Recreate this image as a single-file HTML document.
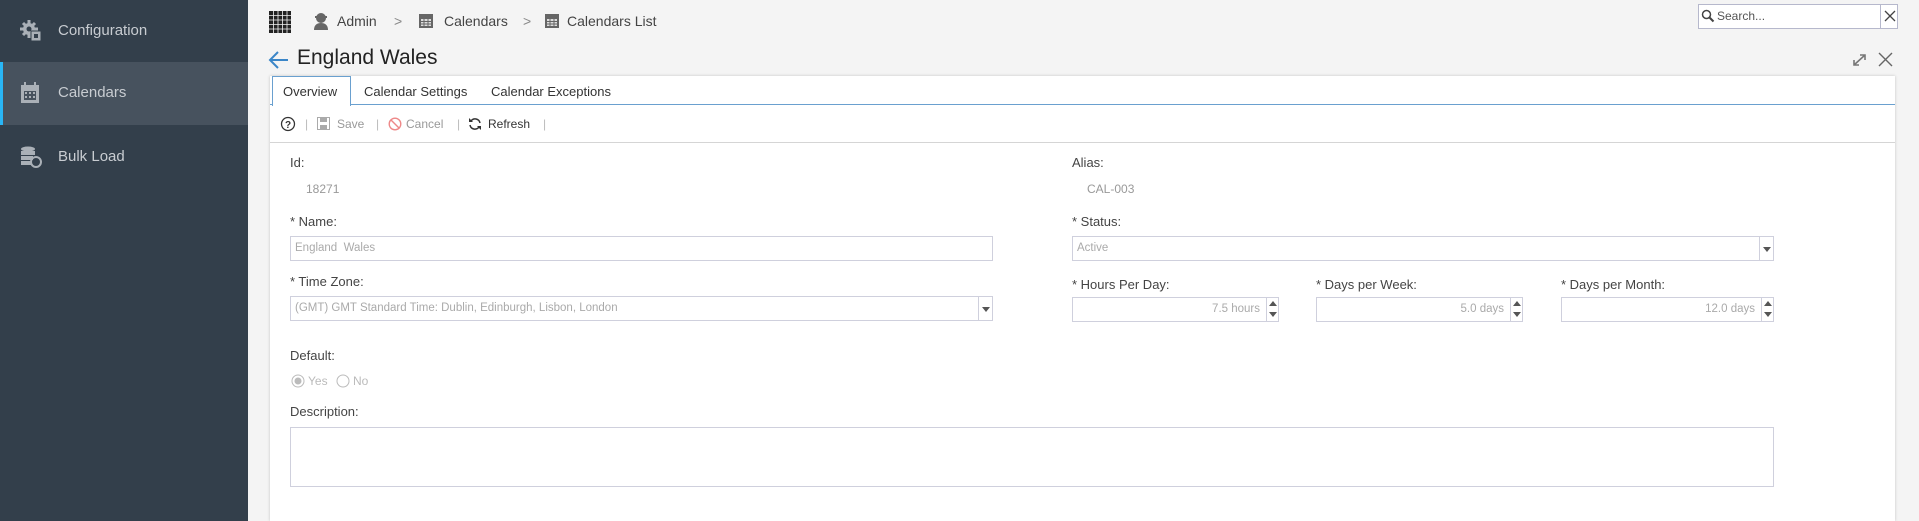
<!DOCTYPE html>
<html style="overflow:hidden;width:1919px;height:521px"><head><meta charset="utf-8"><style>
*{box-sizing:border-box;margin:0;padding:0}
body{width:1919px;height:521px;overflow:hidden;background:#f4f4f4;font-family:"Liberation Sans",sans-serif;font-size:13px;color:#333;position:relative}
.abs{position:absolute}
#side{left:0;top:0;width:248px;height:521px;background:#333f4b}
.item{position:absolute;left:0;width:248px;height:63px;color:#c8ccd1;font-size:15px}
.item span{position:absolute;left:58px;top:22px}
.item svg{position:absolute;left:20px;top:20px}
.active{background:#47525e}
.active:before{content:"";position:absolute;left:0;top:0;width:3px;height:100%;background:#29b6f6}
.bc{top:13px;font-size:14px;color:#444}
.panel{left:270px;top:76px;width:1625px;height:445px;background:#fff;box-shadow:0 0 3px rgba(0,0,0,.2)}
.lbl{font-size:13px;color:#444}
.val{font-size:12px;color:#999}
.inp{border:1px solid #cfd0dd;background:#fff;height:25px;font-size:11.5px;color:#aaa;padding:0 4px;line-height:23px;white-space:nowrap}
.dd{position:absolute;right:0;top:0;width:14px;height:23px;border-left:1px solid #cfd0dd}
.dd:after{content:"";position:absolute;left:3px;top:10px;border:4px solid transparent;border-top:5px solid #555;border-bottom:0}
.spin{position:absolute;right:0;top:0;width:12px;height:23px;border-left:1px solid #cfd0dd}
.spin:before{content:"";position:absolute;left:2px;top:3px;border:4px solid transparent;border-bottom:5px solid #555;border-top:0}
.spin:after{content:"";position:absolute;left:2px;top:14px;border:4px solid transparent;border-top:5px solid #555;border-bottom:0}
.num{text-align:right;padding-right:18px}
.tb{top:117px;font-size:12px}
</style></head><body>
<div id="side" class="abs">
 <div class="item" style="top:0"><svg width="22" height="22" viewBox="0 0 22 22"><circle cx="9" cy="9" r="6" fill="#aab0b7"/><circle cx="9" cy="9" r="2.5" fill="#333f4b"/><g stroke="#aab0b7" stroke-width="3"><path d="M9 0v4M9 14v4M0 9h4M14 9h4M3 3l3 3M15 3l-3 3M3 15l3-3"/></g><rect x="11" y="11" width="10" height="10" fill="#aab0b7" stroke="#333f4b"/><rect x="14" y="14" width="4" height="4" fill="#333f4b"/></svg><span>Configuration</span></div>
 <div class="item active" style="top:62px"><svg width="20" height="22" viewBox="0 0 20 22"><rect x="1" y="3" width="18" height="18" fill="#aab0b7"/><rect x="4" y="0" width="2" height="5" fill="#aab0b7"/><rect x="14" y="0" width="2" height="5" fill="#aab0b7"/><g fill="#47525e"><rect x="4" y="9" width="12" height="9"/></g><g fill="#aab0b7"><rect x="5" y="10" width="2" height="2"/><rect x="9" y="10" width="2" height="2"/><rect x="13" y="10" width="2" height="2"/><rect x="5" y="14" width="2" height="2"/><rect x="9" y="14" width="2" height="2"/><rect x="13" y="14" width="2" height="2"/></g></svg><span>Calendars</span></div>
 <div class="item" style="top:126px"><svg width="22" height="22" viewBox="0 0 22 22"><ellipse cx="8" cy="3" rx="7" ry="2.5" fill="#aab0b7"/><rect x="1" y="5" width="14" height="4" fill="#aab0b7"/><rect x="1" y="10" width="12" height="4" fill="#aab0b7"/><rect x="1" y="15" width="10" height="4" fill="#aab0b7"/><circle cx="16" cy="16" r="5" fill="none" stroke="#aab0b7" stroke-width="2"/></svg><span>Bulk Load</span></div>
</div>
<svg class="abs" style="left:269px;top:11px" width="22" height="22"><rect width="22" height="22" fill="#222"/><g stroke="#f4f4f4" stroke-width="0.8"><path d="M4.5 0v22M9 0v22M13.5 0v22M18 0v22M0 4.5h22M0 9h22M0 13.5h22M0 18h22"/></g></svg>
<svg class="abs" style="left:313px;top:12px" width="16" height="18"><circle cx="8" cy="6" r="5" fill="#666"/><rect x="2" y="4" width="12" height="2" fill="#666"/><path d="M1 18c0-5 3-7 7-7s7 2 7 7z" fill="#666"/></svg>
<div class="abs bc" style="left:337px">Admin</div>
<div class="abs bc" style="left:394px;color:#888">&gt;</div>
<svg class="abs" style="left:419px;top:12px" width="14" height="16"><rect x="0" y="2" width="14" height="14" fill="#666"/><rect x="2" y="7" width="10" height="7" fill="#ddd"/><path d="M2 9.5h10M2 12h10M5 7v7M9 7v7" stroke="#666"/></svg>
<div class="abs bc" style="left:444px">Calendars</div>
<div class="abs bc" style="left:523px;color:#888">&gt;</div>
<svg class="abs" style="left:545px;top:12px" width="14" height="16"><rect x="0" y="2" width="14" height="14" fill="#666"/><rect x="2" y="7" width="10" height="7" fill="#ddd"/><path d="M2 9.5h10M2 12h10M5 7v7M9 7v7" stroke="#666"/></svg>
<div class="abs bc" style="left:567px">Calendars List</div>
<div class="abs" style="left:1698px;top:4px;width:200px;height:25px;border:1px solid #b6b8cc;background:#fff"></div>
<div class="abs" style="left:1880px;top:4px;width:1px;height:25px;background:#b6b8cc"></div>
<svg class="abs" style="left:1701px;top:9px" width="14" height="15"><circle cx="5.5" cy="5.5" r="4" fill="none" stroke="#444" stroke-width="1.5"/><path d="M8.5 8.5l4 4" stroke="#444" stroke-width="2"/></svg>
<div class="abs" style="left:1717px;top:9px;font-size:12px;color:#555">Search...</div>
<svg class="abs" style="left:1884px;top:10px" width="12" height="12"><path d="M1 1l10 10M11 1L1 11" stroke="#444" stroke-width="1.3"/></svg>
<svg class="abs" style="left:268px;top:50px" width="22" height="20"><path d="M20 10H3M10 2L2 10l8 8" fill="none" stroke="#3b86c8" stroke-width="2"/></svg>
<div class="abs" style="left:297px;top:46px;font-size:21px;color:#222">England Wales</div>
<svg class="abs" style="left:1852px;top:53px" width="15" height="14"><path d="M2 12L13 2M8 2h5v5M2 7v5h5" fill="none" stroke="#777" stroke-width="1.6"/></svg>
<svg class="abs" style="left:1878px;top:52px" width="15" height="15"><path d="M1 1l13 13M14 1L1 14" stroke="#666" stroke-width="1.4"/></svg>
<div class="abs panel"></div>
<div class="abs" style="left:270px;top:104px;width:1625px;height:1px;background:#6aa0cf"></div>
<div class="abs" style="left:272px;top:76px;width:79px;height:30px;background:#fff;border:1px solid #6aa0cf;border-bottom:none"></div>
<div class="abs" style="left:283px;top:84px;font-size:13px;color:#333">Overview</div>
<div class="abs" style="left:364px;top:84px;font-size:13px;color:#333">Calendar Settings</div>
<div class="abs" style="left:491px;top:84px;font-size:13px;color:#333">Calendar Exceptions</div>
<div class="abs" style="left:270px;top:142px;width:1625px;height:1px;background:#d5d5d5"></div>
<svg class="abs" style="left:280px;top:116px" width="16" height="16"><circle cx="8" cy="8" r="6.5" fill="none" stroke="#333" stroke-width="1.3"/><text x="8" y="12" font-size="10" text-anchor="middle" font-family="Liberation Sans" font-weight="bold" fill="#333">?</text></svg>
<div class="abs tb" style="left:305px;color:#bbb">|</div>
<svg class="abs" style="left:317px;top:117px" width="13" height="13"><rect x="0.5" y="0.5" width="12" height="12" fill="none" stroke="#aaa"/><rect x="3" y="1" width="7" height="4" fill="#aaa"/><rect x="3" y="8" width="7" height="4" fill="#aaa"/></svg>
<div class="abs tb" style="left:337px;color:#999">Save</div>
<div class="abs tb" style="left:376px;color:#bbb">|</div>
<svg class="abs" style="left:388px;top:117px" width="14" height="14"><circle cx="7" cy="7" r="5.8" fill="none" stroke="#e88" stroke-width="1.4"/><path d="M3 3l8 8" stroke="#e88" stroke-width="1.4"/></svg>
<div class="abs tb" style="left:406px;color:#999">Cancel</div>
<div class="abs tb" style="left:457px;color:#bbb">|</div>
<svg class="abs" style="left:468px;top:117px" width="14" height="14"><path d="M12 6A5 5 0 0 0 3 4M2 8a5 5 0 0 0 9 2" fill="none" stroke="#333" stroke-width="1.5"/><path d="M1 1v4h4zM13 13V9H9z" fill="#333"/></svg>
<div class="abs tb" style="left:488px;color:#333">Refresh</div>
<div class="abs tb" style="left:543px;color:#bbb">|</div>

<div class="abs lbl" style="left:290px;top:155px">Id:</div>
<div class="abs val" style="left:306px;top:182px">18271</div>
<div class="abs lbl" style="left:290px;top:214px">* Name:</div>
<div class="abs inp" style="left:290px;top:236px;width:703px">England&nbsp; Wales</div>
<div class="abs lbl" style="left:290px;top:274px">* Time Zone:</div>
<div class="abs inp" style="left:290px;top:296px;width:703px">(GMT) GMT Standard Time: Dublin, Edinburgh, Lisbon, London<div class="dd"></div></div>
<div class="abs lbl" style="left:290px;top:348px">Default:</div>
<svg class="abs" style="left:290px;top:373px" width="110" height="16"><circle cx="8" cy="8" r="6" fill="none" stroke="#bbb"/><circle cx="8" cy="8" r="3.5" fill="#bbb"/><text x="18" y="12" font-size="12" fill="#bbb" font-family="Liberation Sans">Yes</text><circle cx="53" cy="8" r="6" fill="none" stroke="#bbb"/><text x="63" y="12" font-size="12" fill="#bbb" font-family="Liberation Sans">No</text></svg>
<div class="abs lbl" style="left:290px;top:404px">Description:</div>
<div class="abs" style="left:290px;top:427px;width:1484px;height:60px;border:1px solid #cfd0dd"></div>

<div class="abs lbl" style="left:1072px;top:155px">Alias:</div>
<div class="abs val" style="left:1087px;top:182px">CAL-003</div>
<div class="abs lbl" style="left:1072px;top:214px">* Status:</div>
<div class="abs inp" style="left:1072px;top:236px;width:702px">Active<div class="dd"></div></div>
<div class="abs lbl" style="left:1072px;top:277px">* Hours Per Day:</div>
<div class="abs inp num" style="left:1072px;top:297px;width:207px">7.5 hours<div class="spin"></div></div>
<div class="abs lbl" style="left:1316px;top:277px">* Days per Week:</div>
<div class="abs inp num" style="left:1316px;top:297px;width:207px">5.0 days<div class="spin"></div></div>
<div class="abs lbl" style="left:1561px;top:277px">* Days per Month:</div>
<div class="abs inp num" style="left:1561px;top:297px;width:213px">12.0 days<div class="spin"></div></div>
</body></html>
